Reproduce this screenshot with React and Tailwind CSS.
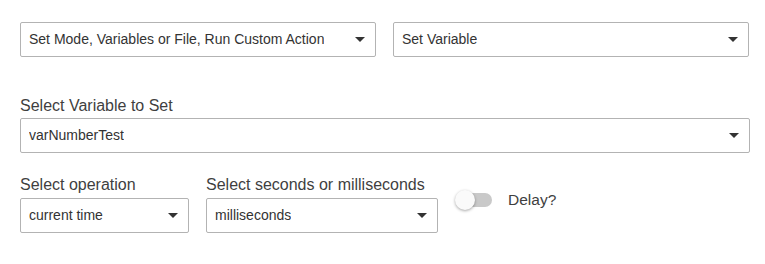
import React from 'react'

function Caret() {
  return (
    <svg width="10" height="5" viewBox="0 0 10 5" className="shrink-0">
      <path d="M0 0 L10 0 L5 5 Z" fill="#333333" />
    </svg>
  )
}

function SelectBox({ value, className = '' }) {
  return (
    <div
      className={`flex h-[35px] items-center justify-between rounded-[2px] border border-[#b3b3b3] bg-white pl-[8px] pr-[10px] text-[14px] text-[#333333] ${className}`}
    >
      <span className="truncate">{value}</span>
      <Caret />
    </div>
  )
}

function Label({ children, className = '' }) {
  return (
    <div className={`h-[20px] text-[16px] leading-[20px] text-[#3f3f3f] ${className}`}>
      {children}
    </div>
  )
}

function Toggle() {
  return (
    <div className="relative h-[20px] w-[37px] shrink-0">
      <div className="absolute left-[1px] right-0 top-[3px] h-[14px] rounded-full bg-[#c9c9c9]" />
      <div className="absolute left-0 top-0 h-[20px] w-[20px] rounded-full bg-[#fafafa] shadow-[0_1px_3px_rgba(0,0,0,0.35)]" />
    </div>
  )
}

export default function App() {
  return (
    <div
      className="h-[264px] w-[765px] bg-white pl-[20px] pr-[16px] pt-[22px]"
      style={{ fontFamily: '"Liberation Sans", Arial, sans-serif' }}
    >
      {/* Action type row */}
      <div className="flex gap-[17px]">
        <SelectBox value="Set Mode, Variables or File, Run Custom Action" className="w-[357px]" />
        <SelectBox value="Set Variable" className="w-[357px]" />
      </div>

      {/* Variable */}
      <div className="mt-[39px]">
        <Label className="mb-[2px]">Select Variable to Set</Label>
        <SelectBox value="varNumberTest" className="w-[730px] text-[13.5px]" />
      </div>

      {/* Operation row */}
      <div className="mt-[22px] flex items-start gap-[17px]">
        <div className="w-[169px]">
          <Label className="mb-[3px]">Select operation</Label>
          <SelectBox value="current time" className="w-full" />
        </div>
        <div className="w-[232px]">
          <Label className="mb-[3px]">Select seconds or milliseconds</Label>
          <SelectBox value="milliseconds" className="w-full" />
        </div>
        <div className="mt-[15px] flex items-center gap-[16px]">
          <Toggle />
          <span className="text-[15.5px] leading-[20px] text-[#3f3f3f]">Delay?</span>
        </div>
      </div>
    </div>
  )
}
